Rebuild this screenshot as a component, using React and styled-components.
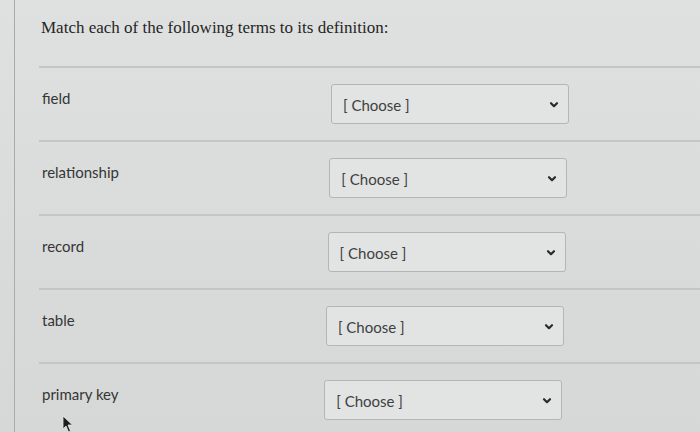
import React from 'react';
import styled, { createGlobalStyle } from 'styled-components';

const Global = createGlobalStyle`
  html, body {
    margin: 0;
    padding: 0;
    background: #dadcdb;
    overflow: hidden;
  }
`;

const terms = ['field', 'relationship', 'record', 'table', 'primary key'];

const App = () => {
  return (
    <>
      <Global />
      <Page>
        <Content>
          <Title>Match each of the following terms to its definition:</Title>
          {terms.map((term, i) => (
            <Row key={term}>
              <Term>{term}</Term>
              <Select $shift={i * 1.7}>
                <span>[ Choose ]</span>
                <Chevron viewBox="0 0 10 8">
                  <path d="M2 2.2 L5 5.2 L8 2.2" fill="none" stroke="#2a2a2a" strokeWidth="2.2" strokeLinecap="round" strokeLinejoin="round" />
                </Chevron>
              </Select>
            </Row>
          ))}
        </Content>
        <Cursor viewBox="0 0 12 18">
          <path d="M1 1 L1 14 L4 11 L6.5 17 L8.5 16 L6 10 L10.5 10 Z" fill="#1e1e1e" stroke="#e8e8e8" strokeWidth="0.8" />
        </Cursor>
      </Page>
    </>
  );
};

//Styled Components
const Page = styled.div`
  position: relative;
  width: 700px;
  height: 432px;
  overflow: hidden;
  background: linear-gradient(180deg, #dfe1e0 0%, #d9dbda 60%, #d6d8d7 100%);
  padding-left: 14px;
  box-sizing: border-box;
`;

const Content = styled.div`
  height: 100%;
  border-left: 1px solid #a9abaa;
  padding-left: 24px;
`;

const Title = styled.div`
  font-family: "Liberation Serif", "Times New Roman", serif;
  font-size: 17px;
  line-height: 19px;
  color: #262626;
  padding-left: 2px;
  padding-top: 18px;
  height: 48px;
`;

const Row = styled.div`
  display: grid;
  grid-template-columns: 292px 238px;
  height: 72px;
  border-top: 2px solid #c4c6c5;
`;

const Term = styled.div`
  font-family: Lato, "Noto Sans", sans-serif;
  font-size: 15px;
  line-height: 18px;
  color: #353535;
  padding-top: 21px;
  padding-left: 3px;
`;

const Select = styled.div`
  margin-top: 16px;
  margin-left: -${p => p.$shift}px;
  margin-right: ${p => p.$shift}px;
  height: 40px;
  box-sizing: border-box;
  border: 1px solid #b4b6b5;
  border-radius: 3px;
  background: #e2e4e3;
  display: flex;
  align-items: center;
  justify-content: space-between;
  padding: 2px 9px 0 11px;
  font-family: Lato, "Noto Sans", sans-serif;
  font-size: 15px;
  color: #404040;
`;

const Chevron = styled.svg`
  width: 10px;
  height: 8px;
`;

const Cursor = styled.svg`
  position: absolute;
  left: 62px;
  top: 415px;
  width: 12px;
  height: 18px;
`;

export default App;
